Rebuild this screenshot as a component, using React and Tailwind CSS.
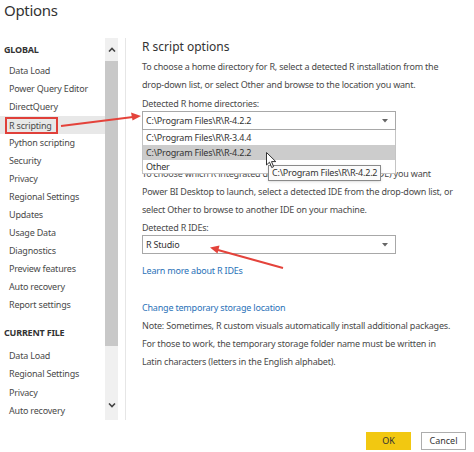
import React from 'react';

const globalItems = [
  'Data Load',
  'Power Query Editor',
  'DirectQuery',
  'R scripting',
  'Python scripting',
  'Security',
  'Privacy',
  'Regional Settings',
  'Updates',
  'Usage Data',
  'Diagnostics',
  'Preview features',
  'Auto recovery',
  'Report settings',
];

const fileItems = ['Data Load', 'Regional Settings', 'Privacy', 'Auto recovery'];

const Caret = () => (
  <svg width="6" height="4" viewBox="0 0 6 4" className="shrink-0">
    <path d="M0 0 L6 0 L3 3.5 Z" fill="#666" />
  </svg>
);

const Select = ({ value }) => (
  <div className="flex items-center justify-between h-[19px] w-[254px] border border-[#a8a8a8] bg-white pl-[3px] pr-[7px] text-[9px] tracking-[-0.2px] text-[#333]">
    <span>{value}</span>
    <Caret />
  </div>
);

const NavItem = ({ label, active, h = 'h-[18px]' }) => (
  <div className={`flex items-center ${h} pl-[9px] ${active ? 'bg-[#e8e8e8]' : ''}`}>
    {active ? (
      <span className="-ml-[4px] border-2 border-[#e0403a] pl-[2px] pr-[4px] leading-[13px]">{label}</span>
    ) : (
      <span>{label}</span>
    )}
  </div>
);

export default function App() {
  return (
    <div
      className="relative w-[474px] h-[452px] bg-white overflow-hidden text-[#4a4a4a]"
      style={{ fontFamily: '"Noto Sans", "Open Sans", sans-serif' }}
    >
      {/* Title */}
      <div className="h-[38px] pl-[4px] text-[15px] tracking-[-0.3px] leading-[21px] text-[#333]">Options</div>

      <div className="flex h-[382px]">
        {/* Sidebar */}
        <div className="flex w-[126px] border-r border-[#e6e6e6]">
          <div className="w-[105px] text-[9px] tracking-[-0.2px]">
            <div className="h-[24px] pl-[4px] flex items-center font-bold text-[9px] text-[#333]">GLOBAL</div>
            {globalItems.map((it) => (
              <NavItem key={it} label={it} active={it === 'R scripting'} />
            ))}
            <div className="h-[32px] pl-[4px] pt-[12px] leading-[14px] font-bold text-[9px] text-[#333]">CURRENT FILE</div>
            {fileItems.map((it) => (
              <NavItem key={'f' + it} label={it} h="h-[18.5px]" />
            ))}
          </div>
          {/* Scrollbar */}
          <div className="w-[13px] bg-[#f0f0f0] flex flex-col">
            <div className="h-[23px] flex items-center justify-center">
              <svg width="8" height="5" viewBox="0 0 8 5">
                <path d="M1 4.5 L4 1.5 L7 4.5" stroke="#444" strokeWidth="1.6" fill="none" />
              </svg>
            </div>
            <div className="h-[285px] bg-[#c8c8c8]" />
            <div className="flex-1 flex items-end justify-center pb-[12px]">
              <svg width="8" height="5" viewBox="0 0 8 5">
                <path d="M1 0.5 L4 3.5 L7 0.5" stroke="#444" strokeWidth="1.6" fill="none" />
              </svg>
            </div>
          </div>
        </div>

        {/* Content */}
        <div className="flex-1 pl-[16px] text-[9px] tracking-[-0.2px] leading-[18px]">
          <div className="h-[20px] text-[12px] tracking-normal leading-[20px] text-[#333] -mt-[1px]">R script options</div>
          <p className="mt-[1px]">
            To choose a home directory for R, select a detected R installation from the
            <br />
            drop-down list, or select Other and browse to the location you want.
          </p>
          <div className="mt-[3px] leading-[14px]">Detected R home directories:</div>
          <div className="relative">
            <Select value="C:\Program Files\R\R-4.2.2" />
            {/* Open dropdown list */}
            <div className="absolute left-0 top-[19px] z-10 w-[254px] border border-t-0 border-[#c4c4c4] bg-white text-[9px] text-[#333]">
              <div className="h-[15px] leading-[15px] pl-[3px]">C:\Program Files\R\R-3.4.4</div>
              <div className="h-[15px] leading-[15px] pl-[3px] bg-[#cccccc]">C:\Program Files\R\R-4.2.2</div>
              <div className="h-[13px] leading-[13px] pl-[3px]">Other</div>
            </div>
            {/* Tooltip */}
            <div className="absolute left-[126px] top-[54px] z-20 h-[16px] px-[3px] border border-[#8a8a8a] bg-[#fbfbfb] text-[9px] leading-[14px] text-[#333] shadow-sm">
              C:\Program Files\R\R-4.2.2
            </div>
            {/* Cursor */}
            <svg className="absolute left-[124px] top-[41px] z-30" width="11" height="17" viewBox="0 0 11 17">
              <path d="M0.5 0.5 L0.5 13 L3.5 10.2 L5.7 15.5 L7.6 14.7 L5.5 9.6 L9.8 9.6 Z" fill="#fff" stroke="#333" strokeWidth="1" />
            </svg>
          </div>
          <p className="mt-[35px]">
            To choose which R integrated development environment (IDE) you want
            <br />
            Power BI Desktop to launch, select a detected IDE from the drop-down list, or
            <br />
            select Other to browse to another IDE on your machine.
          </p>
          <div className="mt-[2px] leading-[14px]">Detected R IDEs:</div>
          <Select value="R Studio" />
          <div className="mt-[8px] text-[#2a72b8]">Learn more about R IDEs</div>
          <div className="mt-[19px] text-[#2a72b8]">Change temporary storage location</div>
          <p>
            Note: Sometimes, R custom visuals automatically install additional packages.
            <br />
            For those to work, the temporary storage folder name must be written in
            <br />
            Latin characters (letters in the English alphabet).
          </p>
        </div>
      </div>

      {/* Footer */}
      <div className="flex justify-end gap-[10px] pr-[8px] pt-[12px] text-[9px]">
        <div className="w-[45px] h-[18px] bg-[#f2c811] flex items-center justify-center text-[#333]">OK</div>
        <div className="w-[45px] h-[18px] border border-[#adadad] bg-white flex items-center justify-center text-[#333]">Cancel</div>
      </div>

      {/* Annotation arrows */}
      <svg className="absolute inset-0 pointer-events-none z-40" width="474" height="452">
        <line x1="61" y1="126" x2="133" y2="117" stroke="#e4433b" strokeWidth="2" />
        <path d="M141 116 L131 112.5 L132.5 120.5 Z" fill="#e4433b" />
        <line x1="283" y1="268" x2="218" y2="250" stroke="#e4433b" strokeWidth="2" />
        <path d="M210 247.5 L219.5 245.5 L217.5 253.5 Z" fill="#e4433b" />
      </svg>
    </div>
  );
}
